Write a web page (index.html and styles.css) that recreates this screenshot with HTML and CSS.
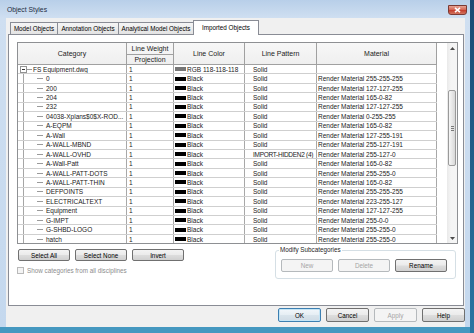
FILE: index.html
```html
<!DOCTYPE html>
<html lang="en">
<head>
    <meta charset="UTF-8">
    <meta name="viewport" content="width=device-width, initial-scale=1.0">
    <title>Object Styles</title>
    <link rel="stylesheet" href="styles.css">
</head>
<body>
    <div class="window">
        <div class="titlebar">
            <span class="title">Object Styles</span>
            <button class="close" aria-label="Close">
                <svg width="7" height="6" viewBox="0 0 7 6"><path d="M1 0.8 L6 5.2 M6 0.8 L1 5.2" stroke="#fff" stroke-width="1.6"/></svg>
            </button>
        </div>
        <div class="client">
            <div class="tabs">
                <div class="tab tab-model">Model Objects</div>
                <div class="tab tab-annot">Annotation Objects</div>
                <div class="tab tab-anal">Analytical Model Objects</div>
                <div class="tab tab-imp active">Imported Objects</div>
            </div>
            <div class="panel">
                <div class="grid">
                    <div class="grid-main">
                        <div class="grid-head">
                            <div class="hcell c-cat">Category</div>
                            <div class="hcell c-lw split">
                                <div class="split-top">Line Weight</div>
                                <div class="split-bottom">Projection</div>
                            </div>
                            <div class="hcell c-col">Line Color</div>
                            <div class="hcell c-pat">Line Pattern</div>
                            <div class="hcell c-mat">Material</div>
                        </div>
                        <div class="grid-body">
                            <div class="row">
                                <div class="cell c-cat root"><span class="expander"></span><span class="stub"></span>FS Equipment.dwg</div>
                                <div class="cell c-lw">1</div>
                                <div class="cell c-col"><span class="swatch gray"></span>RGB 118-118-118</div>
                                <div class="cell c-pat">Solid</div>
                                <div class="cell c-mat"></div>
                            </div>
                            <div class="row">
                                <div class="cell c-cat child">0</div>
                                <div class="cell c-lw">1</div>
                                <div class="cell c-col"><span class="swatch"></span>Black</div>
                                <div class="cell c-pat">Solid</div>
                                <div class="cell c-mat">Render Material 255-255-255</div>
                            </div>
                            <div class="row">
                                <div class="cell c-cat child">200</div>
                                <div class="cell c-lw">1</div>
                                <div class="cell c-col"><span class="swatch"></span>Black</div>
                                <div class="cell c-pat">Solid</div>
                                <div class="cell c-mat">Render Material 127-127-255</div>
                            </div>
                            <div class="row">
                                <div class="cell c-cat child">204</div>
                                <div class="cell c-lw">1</div>
                                <div class="cell c-col"><span class="swatch"></span>Black</div>
                                <div class="cell c-pat">Solid</div>
                                <div class="cell c-mat">Render Material 165-0-82</div>
                            </div>
                            <div class="row">
                                <div class="cell c-cat child">232</div>
                                <div class="cell c-lw">1</div>
                                <div class="cell c-col"><span class="swatch"></span>Black</div>
                                <div class="cell c-pat">Solid</div>
                                <div class="cell c-mat">Render Material 127-127-255</div>
                            </div>
                            <div class="row">
                                <div class="cell c-cat child">04038-Xplans$0$X-ROD...</div>
                                <div class="cell c-lw">1</div>
                                <div class="cell c-col"><span class="swatch"></span>Black</div>
                                <div class="cell c-pat">Solid</div>
                                <div class="cell c-mat">Render Material 0-255-255</div>
                            </div>
                            <div class="row">
                                <div class="cell c-cat child">A-EQPM</div>
                                <div class="cell c-lw">1</div>
                                <div class="cell c-col"><span class="swatch"></span>Black</div>
                                <div class="cell c-pat">Solid</div>
                                <div class="cell c-mat">Render Material 165-0-82</div>
                            </div>
                            <div class="row">
                                <div class="cell c-cat child">A-Wall</div>
                                <div class="cell c-lw">1</div>
                                <div class="cell c-col"><span class="swatch"></span>Black</div>
                                <div class="cell c-pat">Solid</div>
                                <div class="cell c-mat">Render Material 127-255-191</div>
                            </div>
                            <div class="row">
                                <div class="cell c-cat child">A-WALL-MBND</div>
                                <div class="cell c-lw">1</div>
                                <div class="cell c-col"><span class="swatch"></span>Black</div>
                                <div class="cell c-pat">Solid</div>
                                <div class="cell c-mat">Render Material 255-127-191</div>
                            </div>
                            <div class="row">
                                <div class="cell c-cat child">A-WALL-OVHD</div>
                                <div class="cell c-lw">1</div>
                                <div class="cell c-col"><span class="swatch"></span>Black</div>
                                <div class="cell c-pat tight">IMPORT-HIDDEN2 (4)</div>
                                <div class="cell c-mat">Render Material 255-127-0</div>
                            </div>
                            <div class="row">
                                <div class="cell c-cat child">A-Wall-Patt</div>
                                <div class="cell c-lw">1</div>
                                <div class="cell c-col"><span class="swatch"></span>Black</div>
                                <div class="cell c-pat">Solid</div>
                                <div class="cell c-mat">Render Material 165-0-82</div>
                            </div>
                            <div class="row">
                                <div class="cell c-cat child">A-WALL-PATT-DOTS</div>
                                <div class="cell c-lw">1</div>
                                <div class="cell c-col"><span class="swatch"></span>Black</div>
                                <div class="cell c-pat">Solid</div>
                                <div class="cell c-mat">Render Material 255-255-0</div>
                            </div>
                            <div class="row">
                                <div class="cell c-cat child">A-WALL-PATT-THIN</div>
                                <div class="cell c-lw">1</div>
                                <div class="cell c-col"><span class="swatch"></span>Black</div>
                                <div class="cell c-pat">Solid</div>
                                <div class="cell c-mat">Render Material 165-0-82</div>
                            </div>
                            <div class="row">
                                <div class="cell c-cat child">DEFPOINTS</div>
                                <div class="cell c-lw">1</div>
                                <div class="cell c-col"><span class="swatch"></span>Black</div>
                                <div class="cell c-pat">Solid</div>
                                <div class="cell c-mat">Render Material 255-255-255</div>
                            </div>
                            <div class="row">
                                <div class="cell c-cat child">ELECTRICALTEXT</div>
                                <div class="cell c-lw">1</div>
                                <div class="cell c-col"><span class="swatch"></span>Black</div>
                                <div class="cell c-pat">Solid</div>
                                <div class="cell c-mat">Render Material 223-255-127</div>
                            </div>
                            <div class="row">
                                <div class="cell c-cat child">Equipment</div>
                                <div class="cell c-lw">1</div>
                                <div class="cell c-col"><span class="swatch"></span>Black</div>
                                <div class="cell c-pat">Solid</div>
                                <div class="cell c-mat">Render Material 127-127-255</div>
                            </div>
                            <div class="row">
                                <div class="cell c-cat child">G-IMPT</div>
                                <div class="cell c-lw">1</div>
                                <div class="cell c-col"><span class="swatch"></span>Black</div>
                                <div class="cell c-pat">Solid</div>
                                <div class="cell c-mat">Render Material 255-0-0</div>
                            </div>
                            <div class="row">
                                <div class="cell c-cat child">G-SHBD-LOGO</div>
                                <div class="cell c-lw">1</div>
                                <div class="cell c-col"><span class="swatch"></span>Black</div>
                                <div class="cell c-pat">Solid</div>
                                <div class="cell c-mat">Render Material 255-255-0</div>
                            </div>
                            <div class="row">
                                <div class="cell c-cat child">hatch</div>
                                <div class="cell c-lw">1</div>
                                <div class="cell c-col"><span class="swatch"></span>Black</div>
                                <div class="cell c-pat">Solid</div>
                                <div class="cell c-mat">Render Material 255-255-0</div>
                            </div>
                        </div>
                    </div>
                    <div class="grid-filler"></div>
                    <div class="scrollbar">
                        <div class="sb-arrow">
                            <svg width="5" height="3" viewBox="0 0 5 3"><path d="M0 3 L2.5 0 L5 3 Z" fill="#4d4d4d"/></svg>
                        </div>
                        <div class="sb-track">
                            <div class="sb-thumb"><span class="grip"></span></div>
                        </div>
                        <div class="sb-arrow">
                            <svg width="5" height="3" viewBox="0 0 5 3"><path d="M0 0 L2.5 3 L5 0 Z" fill="#4d4d4d"/></svg>
                        </div>
                    </div>
                </div>
                <div class="panel-foot">
                    <div class="foot-left">
                        <div class="btn-row">
                            <button class="btn">Select All</button>
                            <button class="btn">Select None</button>
                            <button class="btn">Invert</button>
                        </div>
                        <label class="check"><span class="check-box"></span>Show categories from all disciplines</label>
                    </div>
                    <fieldset class="subcats">
                        <legend>Modify Subcategories</legend>
                        <div class="btn-row sub-row">
                            <button class="btn" disabled>New</button>
                            <button class="btn" disabled>Delete</button>
                            <button class="btn">Rename</button>
                        </div>
                    </fieldset>
                </div>
            </div>
            <div class="dialog-buttons">
                <button class="btn dlg default">OK</button>
                <button class="btn dlg">Cancel</button>
                <button class="btn dlg" disabled>Apply</button>
                <button class="btn dlg">Help</button>
            </div>
        </div>
    </div>
</body>
</html>
```
FILE: styles.css
```css
body {
    margin: 0;
    width: 474px;
    height: 333px;
    overflow: hidden;
    background: linear-gradient(#1a4a74, #2a76a2);
    font-family: "Liberation Sans", Arial, sans-serif;
    color: #000;
}
.window {
    width: 470px;
    height: 333px;
    box-sizing: border-box;
    padding: 0 5px 0 6px;
    border-bottom: 6px solid #4598c0;
    background: linear-gradient(#b8cfe9, #cfdff1 18px, #c4d8ee);
    display: flex;
    flex-direction: column;
}
.titlebar {
    height: 18px;
    flex: none;
    display: flex;
    align-items: flex-start;
}
.title {
    font-size: 6.8px;
    color: #1d2d42;
    margin: 6px 0 0 1px;
}
.close {
    margin: 5px -2px 0 auto;
    width: 19px;
    height: 10px;
    padding: 0;
    border: 1px solid #7b3a34;
    border-radius: 0 0 3px 3px;
    background: linear-gradient(#e6a394, #d4604f 50%, #c43c2c 52%, #d27560);
    display: flex;
    align-items: center;
    justify-content: center;
}
.client {
    flex: 1;
    background: #f0f0f0;
    display: flex;
    flex-direction: column;
}

/* tabs */
.tabs {
    height: 16px;
    flex: none;
    display: flex;
    align-items: flex-end;
    padding-left: 4px;
    position: relative;
    z-index: 1;
}
.tab {
    height: 12px;
    box-sizing: border-box;
    border: 1px solid #898c95;
    border-bottom: none;
    margin-left: -1px;
    background: linear-gradient(#f5f5f5, #e3e3e3);
    font-size: 6.3px;
    display: flex;
    align-items: center;
    justify-content: center;
    white-space: nowrap;
}
.tab-model { width: 48px; margin-left: 0; }
.tab-annot { width: 62px; }
.tab-anal { width: 76px; }
.tab-imp { width: 66px; }
.tab.active {
    height: 15px;
    margin-bottom: -1px;
    background: #fff;
    padding-bottom: 1px;
}

/* panel */
.panel {
    margin-left: 2px;
    width: 456px;
    height: 272px;
    box-sizing: border-box;
    border: 1px solid #898c95;
    background: #fff;
    padding: 7px 5px 0 8px;
}

/* grid */
.grid {
    display: flex;
    width: 441px;
    height: 202px;
    box-sizing: border-box;
    border: 1px solid #8e9093;
}
.grid-main {
    width: 419px;
    display: flex;
    flex-direction: column;
}
.grid-head {
    height: 22px;
    flex: none;
    display: flex;
    box-sizing: border-box;
    border-bottom: 1px solid #a0a0a0;
    background: linear-gradient(#f7f7f7, #efefef);
    font-size: 7px;
    color: #222;
}
.hcell {
    box-sizing: border-box;
    border-right: 1px solid #a0a0a0;
    display: flex;
    align-items: center;
    justify-content: center;
    white-space: nowrap;
}
.hcell.split {
    flex-direction: column;
    align-items: stretch;
}
.split-top {
    height: 12px;
    box-sizing: border-box;
    border-bottom: 1px solid #a0a0a0;
    display: flex;
    align-items: center;
    justify-content: center;
}
.split-bottom {
    flex: 1;
    display: flex;
    align-items: center;
    justify-content: center;
}
.c-cat { width: 109px; }
.c-lw { width: 47px; }
.c-col { width: 71px; }
.c-pat { width: 72px; }
.c-mat { width: 120px; }

.grid-body {
    flex: 1;
    overflow: hidden;
}
.row {
    height: 9.45px;
    box-sizing: border-box;
    display: flex;
    border-bottom: 1px solid #cfcfcf;
    font-size: 6.5px;
    color: #1a1a1a;
}
.cell {
    box-sizing: border-box;
    border-right: 1px solid #a8a8a8;
    display: flex;
    align-items: center;
    white-space: nowrap;
    overflow: hidden;
}
.cell.c-lw { padding-left: 2px; }
.cell.c-col { padding-left: 1px; }
.cell.c-pat { padding-left: 8px; }
.cell.c-pat.tight { letter-spacing: -0.28px; }
.cell.c-mat { padding-left: 1px; }
.cell.child {
    padding-left: 28px;
    background:
        linear-gradient(#a6a6a6, #a6a6a6) 5px 0 / 1px 100% no-repeat,
        linear-gradient(#9a9a9a, #9a9a9a) 19px 50% / 6px 1px no-repeat;
}
.cell.root {
    padding-left: 2px;
    background: linear-gradient(#a6a6a6, #a6a6a6) 5px 100% / 1px 2px no-repeat;
}
.expander {
    width: 7px;
    height: 7px;
    box-sizing: border-box;
    border: 1px solid #939393;
    background: #fff linear-gradient(#333, #333) center / 3px 1px no-repeat;
    flex: none;
}
.stub {
    width: 5px;
    height: 1px;
    background: #9a9a9a;
    margin-right: 1px;
    flex: none;
}
.swatch {
    width: 11px;
    height: 4px;
    background: #000;
    margin-right: 1px;
    flex: none;
}
.swatch.gray {
    background: #767676;
}

.grid-filler {
    width: 10px;
}
.scrollbar {
    width: 10px;
    display: flex;
    flex-direction: column;
    background: linear-gradient(to right, #e9e9e9, #f5f5f5 40%, #f5f5f5);
}
.sb-arrow {
    height: 10px;
    flex: none;
    display: flex;
    align-items: center;
    justify-content: center;
}
.sb-track {
    flex: 1;
    padding-top: 37px;
}
.sb-thumb {
    width: 8px;
    height: 76px;
    margin-left: 1px;
    box-sizing: border-box;
    border: 1px solid #9a9a9a;
    border-radius: 2px;
    background: linear-gradient(to right, #f6f6f6, #e8e8e8 50%, #d8d8d8);
    display: flex;
    align-items: center;
    justify-content: center;
}
.grip {
    width: 3px;
    height: 5px;
    background: repeating-linear-gradient(#7a7a7a 0 1px, transparent 1px 2px);
}

/* footer inside panel */
.panel-foot {
    display: flex;
    justify-content: space-between;
    align-items: flex-start;
}
.foot-left {
    padding-top: 5px;
}
.btn-row {
    display: flex;
    gap: 5px;
    margin-left: 1px;
}
.btn {
    width: 52px;
    height: 12px;
    padding: 0;
    border: 1px solid #707070;
    border-radius: 2px;
    background: linear-gradient(#f3f3f3, #ebebeb 48%, #dddddd 52%, #d0d0d0);
    font-family: "Liberation Sans", Arial, sans-serif;
    font-size: 6.3px;
    color: #000;
}
.btn:disabled {
    border-color: #b5b9bc;
    background: #f4f4f4;
    color: #a4a4a4;
}
.check {
    margin-top: 6px;
    display: flex;
    align-items: center;
    gap: 3px;
    font-size: 6.3px;
    color: #8d8d8d;
}
.check-box {
    width: 7px;
    height: 7px;
    box-sizing: border-box;
    border: 1px solid #b9b9b9;
    background: #f4f4f4;
}
.subcats {
    width: 181px;
    box-sizing: border-box;
    margin: 2px 2px 0 0;
    padding: 5px 8px 6px 3px;
    border: 1px solid #d5dfe5;
    border-radius: 3px;
    min-inline-size: 0;
}
.subcats legend {
    padding: 0 1px;
    font-size: 6.3px;
    line-height: 8px;
    color: #1e1e1e;
}
.sub-row {
    margin-left: 2px;
}
.sub-row .btn {
    height: 13px;
}

/* dialog buttons */
.dialog-buttons {
    margin-top: 2px;
    display: flex;
    justify-content: flex-end;
    gap: 5px;
}
.btn.dlg {
    width: 43px;
    height: 14px;
}
.btn.default {
    border-color: #3c7fb1;
    background: linear-gradient(#f2f7fb, #e6eef4 48%, #d9e4ec 52%, #cfdbe5);
    box-shadow: inset 0 0 0 1px #c4e5f6;
}
```
